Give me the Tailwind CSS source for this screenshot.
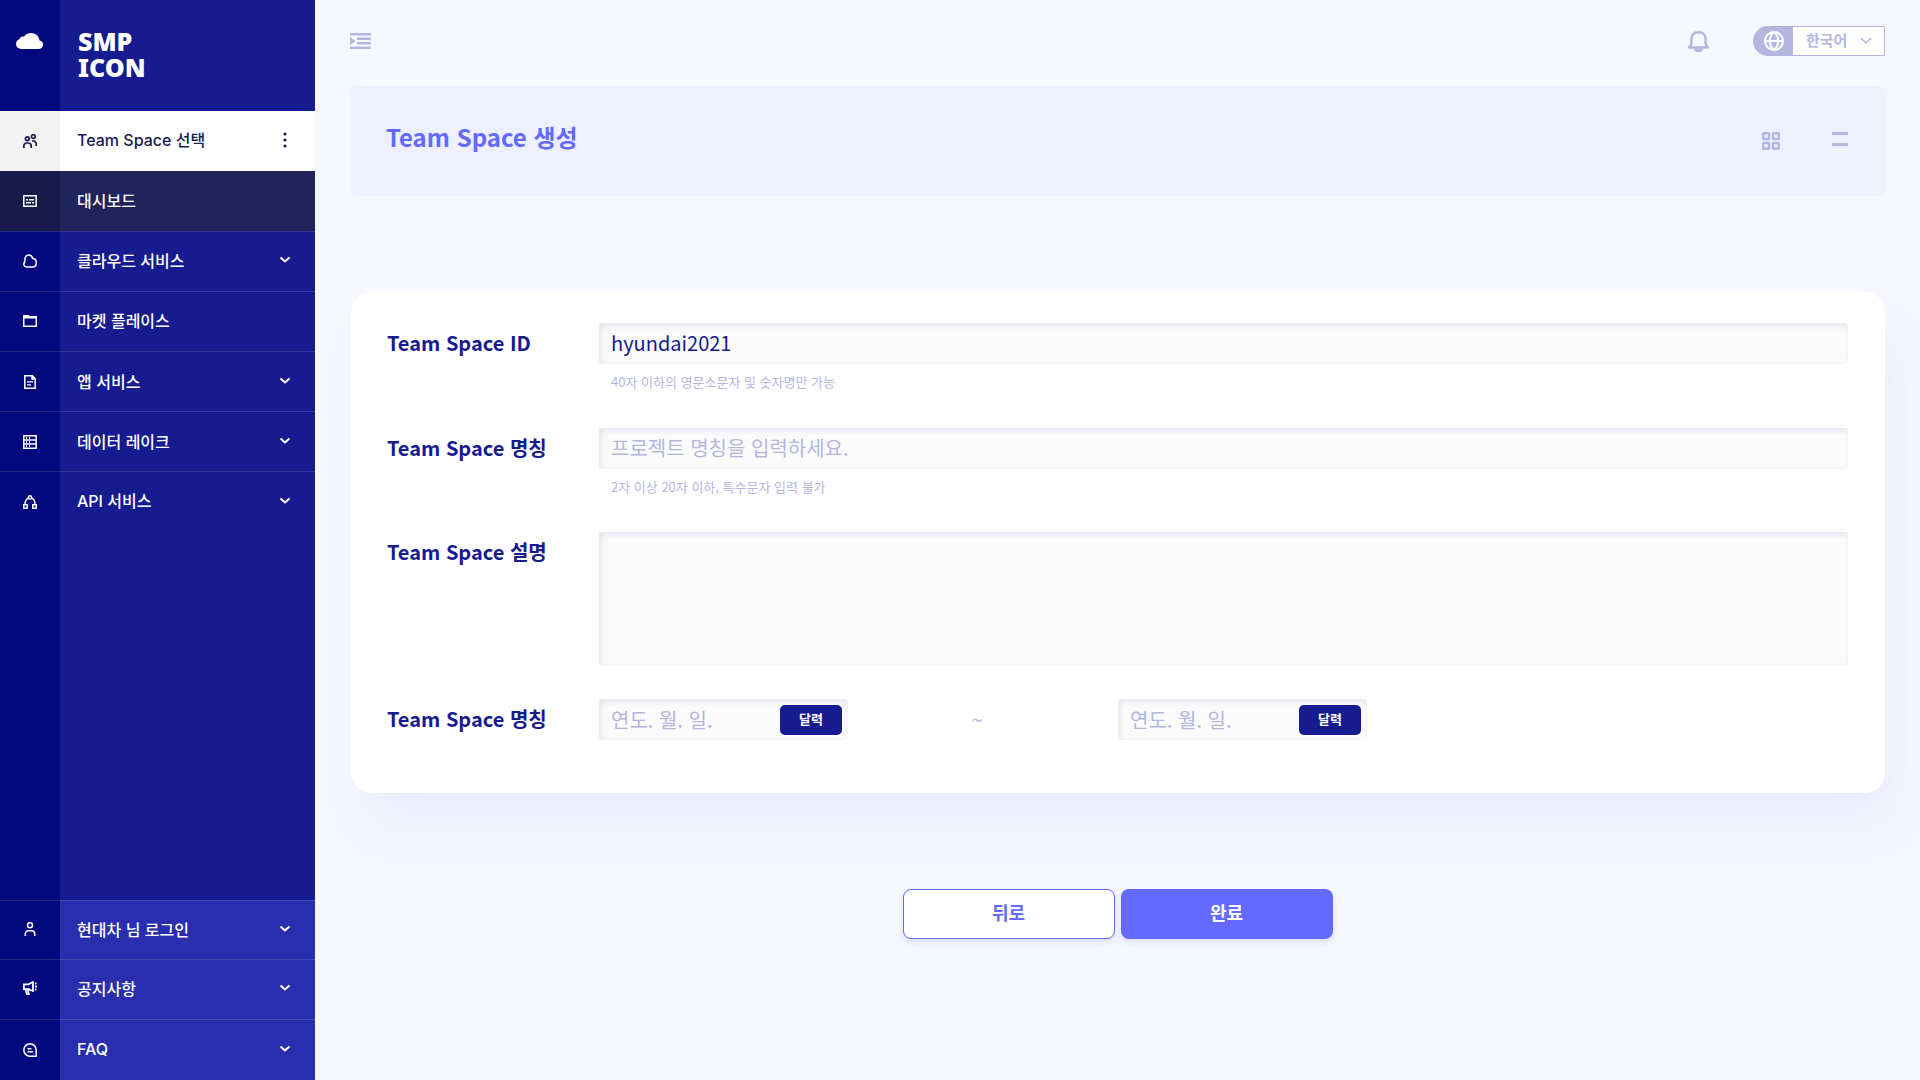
<!DOCTYPE html>
<html lang="ko">

<head>
    <meta charset="UTF-8">
    <meta name="viewport" content="width=device-width, initial-scale=1.0">
    <title>Team Space 생성</title>
    <script src="https://cdn.jsdelivr.net/npm/@tailwindcss/browser@4"></script>
</head>

<body class="min-h-screen flex bg-[#f6f7ff] font-['Noto_Sans_CJK_KR',sans-serif]">
    <!-- chevron shared by the menu rows -->
    <svg class="hidden">
        <symbol id="chevron" viewBox="0 0 12 8">
            <path d="M1.500 1.500 6 5.500l4.500-4" fill="none" stroke="currentColor" stroke-width="2" />
        </symbol>
    </svg>

    <aside class="relative z-10 w-[315px] shrink-0 min-h-screen flex flex-col bg-[linear-gradient(to_right,#02087d_60px,#161b8f_60px)] text-white">
        <div class="flex h-[111px]">
            <div class="w-[60px] pt-[33px] pr-0.5 flex justify-center">
                <svg class="w-[27px] h-4" viewBox="0 0 27 16" fill="currentColor">
                    <path d="M5 16a5 5 0 0 1-5-5c0-2.600 1.600-4.400 3.600-5.100C4.200 4 6 3.200 8 3.700 9.300 1.300 12 0 15 0c4.600 0 8 3 8.600 7.600 2 .3 3.400 2 3.400 4A4.300 4.300 0 0 1 22.700 16z" />
                </svg>
            </div>
            <p class="pt-7 pl-[18px] text-[25px] leading-[26px] font-black font-['Noto_Sans',sans-serif]">SMP<br>ICON</p>
        </div>

        <nav class="grow flex flex-col">
            <a href="#" class="flex items-center h-[60px] bg-white text-[#1a1a50]">
                <span class="w-[60px] h-full shrink-0 flex items-center justify-center bg-[#f3f3f3]">
                    <svg class="w-3.5 h-3.5" viewBox="0 0 14 14" fill="none" stroke="currentColor" stroke-width="1.700">
                        <circle cx="4.300" cy="4.700" r="1.900" />
                        <circle cx="10.300" cy="2.600" r="1.900" />
                        <path d="M.8 14v-2a3 3 0 0 1 3-3h1.400a3 3 0 0 1 3 3v2M9 7h1.200a3 3 0 0 1 3 3v2" />
                    </svg>
                </span>
                <span class="pl-[17px] pb-0.5 grow font-medium font-[Inter,'Noto_Sans_CJK_KR',sans-serif]">Team Space 선택</span>
                <svg class="w-1 h-4 mr-7 mb-0.5" viewBox="0 0 4 16" fill="currentColor">
                    <circle cx="2" cy="2" r="1.600" />
                    <circle cx="2" cy="8" r="1.600" />
                    <circle cx="2" cy="14" r="1.600" />
                </svg>
            </a>
            <a href="#" class="flex items-center h-[60px] bg-[#21235b]">
                <span class="w-[60px] h-full shrink-0 flex items-center justify-center bg-[#191a4c]">
                    <svg class="w-3.5 h-3" viewBox="0 0 14 12" fill="none" stroke="currentColor" stroke-width="1.500">
                        <path d="M.8.8h12.400v10.400H.8zM3 4.800h2M6 4.800h5M3 7.800h5M9 7.800h2" />
                    </svg>
                </span>
                <span class="pl-[17px] pb-0.5 grow font-medium">대시보드</span>
            </a>
            <a href="#" class="flex items-center h-[60px] pb-0.5 border-t border-white/12">
                <span class="w-[60px] shrink-0 flex justify-center">
                    <svg class="w-3.5 h-3.5" viewBox="0 0 14 14" fill="none" stroke="currentColor" stroke-width="1.500">
                        <path d="M3.500 13A2.700 2.700 0 0 1 1.600 8.400C1.200 7.500 1.900 6.500 2 5.500 1.800 3 3.500 1 5.800 1c2 0 3.400 1.300 3.800 3.300 2.200.3 3.700 2.200 3.700 4.400C13.300 11.200 11.800 13 9.600 13z" />
                    </svg>
                </span>
                <span class="pl-[17px] pb-0.5 grow font-medium">클라우드 서비스</span>
                <svg class="w-3 h-2 mr-6 mb-0.5"><use href="#chevron" /></svg>
            </a>
            <a href="#" class="flex items-center h-[60px] pb-0.5 border-t border-white/12">
                <span class="w-[60px] shrink-0 flex justify-center">
                    <svg class="w-3.5 h-3" viewBox="0 0 14 12" fill="currentColor">
                        <path fill-rule="evenodd" d="M0 0h5.500l1 1H14v11H0zM1.500 3.500v7h11v-7z" />
                    </svg>
                </span>
                <span class="pl-[17px] pb-0.5 grow font-medium">마켓 플레이스</span>
            </a>
            <a href="#" class="flex items-center h-[60px] border-t border-white/12">
                <span class="w-[60px] shrink-0 flex justify-center">
                    <svg class="w-3 h-3.5" viewBox="0 0 12 14" fill="none" stroke="currentColor" stroke-width="1.500">
                        <path d="M.8.8h7.400l3 3v9.400H.8z" />
                        <path d="M8 .8v3.200h3.200z" fill="currentColor" />
                        <path d="M3 6.800h6M3 9.800h4" stroke-width="1.300" />
                    </svg>
                </span>
                <span class="pl-[17px] pb-0.5 grow font-medium">앱 서비스</span>
                <svg class="w-3 h-2 mr-6 mb-0.5"><use href="#chevron" /></svg>
            </a>
            <a href="#" class="flex items-center h-[60px] border-t border-white/12">
                <span class="w-[60px] shrink-0 flex justify-center">
                    <svg class="w-3.5 h-3.5" viewBox="0 0 14 14" fill="none" stroke="currentColor" stroke-width="1.500">
                        <path d="M.8.8h12.400v12.400H.8zM.8 5h12.400M.8 9h12.400" />
                        <path d="M3 3h1M6 3h1M3 7h1M6 7h1M3 11h1M6 11h1" stroke-width="2" />
                    </svg>
                </span>
                <span class="pl-[17px] pb-0.5 grow font-medium">데이터 레이크</span>
                <svg class="w-3 h-2 mr-6 mb-0.5"><use href="#chevron" /></svg>
            </a>
            <a href="#" class="flex items-center h-[60px] border-t border-white/12">
                <span class="w-[60px] shrink-0 flex justify-center">
                    <svg class="w-3.5 h-3.5" viewBox="0 0 14 14" fill="none" stroke="currentColor" stroke-width="1.500">
                        <path d="M.8 9.800h3.400v3.400H.8zM9.800 9.800h3.400v3.400H9.800z" />
                        <circle cx="7" cy="2.400" r="1.600" />
                        <path d="M2 9.500C2 6 3.500 3.800 5.500 2.800M12 9.500c0-3.500-1.500-5.700-3.500-6.700" />
                    </svg>
                </span>
                <span class="pl-[17px] pb-0.5 grow font-medium font-[Inter,'Noto_Sans_CJK_KR',sans-serif]">API 서비스</span>
                <svg class="w-3 h-2 mr-6 mb-0.5"><use href="#chevron" /></svg>
            </a>

            <div class="mt-auto bg-[linear-gradient(to_right,transparent_60px,#282eae_60px)]">
                <a href="#" class="flex items-center h-[59px] pb-0.5 border-t border-white/12">
                    <span class="w-[60px] shrink-0 flex justify-center">
                        <svg class="w-3 h-3.5" viewBox="0 0 12 14" fill="none" stroke="currentColor" stroke-width="1.500">
                            <circle cx="6" cy="3.300" r="2.500" />
                            <path d="M1.300 14v-2.200a3 3 0 0 1 3-3h3.400a3 3 0 0 1 3 3V14" />
                        </svg>
                    </span>
                    <span class="pl-[17px] grow font-medium">현대차 님 로그인</span>
                    <svg class="w-3 h-2 mr-6"><use href="#chevron" /></svg>
                </a>
                <a href="#" class="flex items-center h-[60px] pb-1 border-t border-white/12">
                    <span class="w-[60px] shrink-0 flex justify-center">
                        <svg class="w-3.5 h-3.5" viewBox="0 0 14 14" fill="none" stroke="currentColor" stroke-width="1.800">
                            <path d="M.9 3.300h4.600L10 1v9L5.500 8.200H.9zM2.500 8.500 4 13.200h1.800L5 8.500" />
                            <path d="M12 2.500h1.500M12 5.500h2M12 8.500h1.500" />
                        </svg>
                    </span>
                    <span class="pl-[17px] grow font-medium">공지사항</span>
                    <svg class="w-3 h-2 mr-6"><use href="#chevron" /></svg>
                </a>
                <a href="#" class="flex items-center h-[61px] border-t border-white/12">
                    <span class="w-[60px] shrink-0 flex justify-center">
                        <svg class="w-3.5 h-3.5" viewBox="0 0 14 14" fill="none" stroke="currentColor" stroke-width="1.500">
                            <path d="M13.200 13.200H7A6.200 6.200 0 1 1 13.200 7z" />
                            <path d="M4.500 5.800h4M4.500 8.800h5.500" />
                        </svg>
                    </span>
                    <span class="pl-[17px] pb-0.5 grow font-medium font-[Inter,'Noto_Sans_CJK_KR',sans-serif]">FAQ</span>
                    <svg class="w-3 h-2 mr-6 mb-0.5"><use href="#chevron" /></svg>
                </a>
            </div>
        </nav>
    </aside>

    <main class="grow min-w-0 px-[35px]">
        <header class="h-[86px] flex items-center justify-between pb-1 text-[#b4b6e0]">
            <button type="button" aria-label="메뉴 접기">
                <svg class="w-[21px] h-4" viewBox="0 0 21 16" fill="currentColor">
                    <path d="M0 0h21v2.500H0zM7 4.500h14V7H7zM7 9h14v2.500H7zM0 13.500h21V16H0zM0 4l5.500 4L0 12z" />
                </svg>
            </button>
            <div class="flex items-center">
                <button type="button" aria-label="알림" class="mr-11">
                    <svg class="w-[21px] h-[21px]" viewBox="0 0 21 21" fill="none" stroke="currentColor" stroke-width="2.400">
                        <path d="M1.200 16.500h18.600L17.600 13V8C17.600 3.500 14.500 1.200 10.500 1.200S3.400 3.500 3.400 8v5z" stroke-linejoin="round" />
                        <path d="M6 17.500h9a4.500 4 0 0 1-9 0z" fill="currentColor" stroke="none" />
                    </svg>
                </button>
                <label for="language" class="w-[39px] h-[30px] flex items-center justify-center pl-0.5 rounded-l-full bg-[#b4b6e0] text-white">
                    <svg class="w-5 h-5" viewBox="0 0 20 20" fill="none" stroke="currentColor" stroke-width="2">
                        <circle cx="10" cy="10" r="9" />
                        <path d="M10 1C4.500 5.500 4.500 14.500 10 19M10 1c5.500 4.500 5.500 13.500 0 18M1.500 10h17" />
                    </svg>
                </label>
                <div class="relative">
                    <select id="language" class="appearance-none block w-[93px] h-[30px] pl-[13px] pb-0.5 border border-[#b4b6e0] bg-white text-[15px] font-bold outline-none">
                        <option>한국어</option>
                    </select>
                    <svg class="absolute right-[13px] top-[11px] w-3 h-2 pointer-events-none" viewBox="0 0 12 8" fill="none" stroke="currentColor" stroke-width="1.500">
                        <path d="M.8 1 6 6l5.200-5" />
                    </svg>
                </div>
            </div>
        </header>

        <section class="h-[110px] flex items-center justify-between px-9 rounded-lg bg-[#eeefff]">
            <h1 class="text-2xl font-bold text-[#646aff] pb-2">Team Space 생성</h1>
            <div class="flex items-center text-[#b4b6e0]">
                <button type="button" aria-label="카드 보기" class="mr-[52px]">
                    <svg class="w-[18px] h-[18px]" viewBox="0 0 18 18" fill="none" stroke="currentColor" stroke-width="2.400">
                        <rect x="1.200" y="1.200" width="5.800" height="5.800" rx=".5" />
                        <rect x="11" y="1.200" width="5.800" height="5.800" rx=".5" />
                        <rect x="1.200" y="11" width="5.800" height="5.800" rx=".5" />
                        <rect x="11" y="11" width="5.800" height="5.800" rx=".5" />
                    </svg>
                </button>
                <button type="button" aria-label="목록 보기" class="mr-px pb-1">
                    <svg class="w-4 h-3.5" viewBox="0 0 16 14" fill="currentColor">
                        <path d="M0 0h16v3H0zM0 11h16v3H0z" />
                    </svg>
                </button>
            </div>
        </section>

        <form>
            <div class="mt-24 ml-px h-[501px] pl-9 pr-[37px] pt-[31px] rounded-[20px] bg-white shadow-[12px_36px_50px_-4px_#eaecfd]">
                <div class="flex h-[105px]">
                    <label for="space-id" class="w-[212px] shrink-0 text-xl leading-10 font-bold text-[#161b8f]">Team Space ID</label>
                    <div class="grow">
                        <input type="text" id="space-id" value="hyundai2021"
                            class="block w-full h-[41px] px-3 pb-0.5 rounded bg-[#fbfbfb] shadow-[inset_2px_2px_6px_#e2e2ee] text-xl text-[#161b8f] outline-none">
                        <p class="pl-3 mt-2 text-[13px] leading-5 text-[#b4b6e0]">40자 이하의 영문소문자 및 숫자명만 가능</p>
                    </div>
                </div>
                <div class="flex h-[104px]">
                    <label for="space-name" class="w-[212px] shrink-0 text-xl leading-10 font-bold text-[#161b8f]">Team Space 명칭</label>
                    <div class="grow">
                        <input type="text" id="space-name" placeholder="프로젝트 명칭을 입력하세요."
                            class="block w-full h-[41px] px-3 pb-0.5 rounded bg-[#fbfbfb] shadow-[inset_2px_2px_6px_#e2e2ee] text-xl text-[#161b8f] placeholder:text-[#b4b6e0] outline-none">
                        <p class="pl-3 mt-2 text-[13px] leading-5 text-[#b4b6e0]">2자 이상 20자 이하, 특수문자 입력 불가</p>
                    </div>
                </div>
                <div class="flex">
                    <label for="space-desc" class="w-[212px] shrink-0 text-xl leading-10 font-bold text-[#161b8f]">Team Space 설명</label>
                    <textarea id="space-desc"
                        class="block grow h-[134px] px-3 py-1 rounded bg-[#fbfbfb] shadow-[inset_2px_2px_6px_#e2e2ee] text-xl text-[#161b8f] outline-none resize-none"></textarea>
                </div>
                <div class="flex mt-[33px]">
                    <label for="date-start" class="w-[212px] shrink-0 text-xl leading-10 font-bold text-[#161b8f]">Team Space 명칭</label>
                    <div class="w-[249px] h-[41px] pl-3 pr-1.5 flex items-center rounded bg-[#fbfbfb] shadow-[inset_2px_2px_6px_#e2e2ee]">
                        <input type="text" id="date-start" placeholder="연도. 월. 일."
                            class="grow min-w-0 text-xl text-[#161b8f] placeholder:text-[#b4b6e0] outline-none">
                        <button type="button" class="w-[62px] h-[30px] pb-0.5 shrink-0 rounded-[5px] bg-[#161b8f] text-[13px] font-bold text-white">달력</button>
                    </div>
                    <span class="w-[270px] flex items-center justify-center pr-3 text-xl text-[#b4b6e0]">~</span>
                    <div class="w-[249px] h-[41px] pl-3 pr-1.5 flex items-center rounded bg-[#fbfbfb] shadow-[inset_2px_2px_6px_#e2e2ee]">
                        <input type="text" aria-label="종료일" placeholder="연도. 월. 일."
                            class="grow min-w-0 text-xl text-[#161b8f] placeholder:text-[#b4b6e0] outline-none">
                        <button type="button" class="w-[62px] h-[30px] pb-0.5 shrink-0 rounded-[5px] bg-[#161b8f] text-[13px] font-bold text-white">달력</button>
                    </div>
                </div>
            </div>

            <div class="mt-24 flex justify-center gap-1.5">
                <button type="button" class="w-[212px] h-[50px] pb-1 rounded-lg border border-[#646aff] bg-white text-lg font-bold text-[#646aff] shadow-[0_3px_6px_#dcdefb]">뒤로</button>
                <button type="submit" class="w-[212px] h-[50px] pb-1 rounded-lg bg-[#646aff] text-lg font-bold text-white shadow-[0_3px_6px_#dcdefb]">완료</button>
            </div>
        </form>
    </main>
</body>

</html>
